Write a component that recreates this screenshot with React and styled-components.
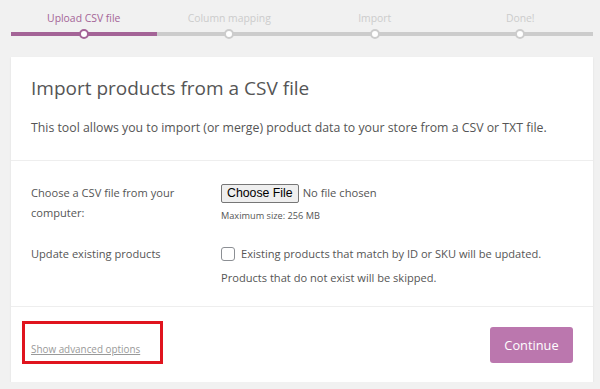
import React from "react";
import styled, { createGlobalStyle } from "styled-components";

const GlobalStyle = createGlobalStyle`
  body {
    margin: 0;
    background: #f1f1f1;
    font-family: "Open Sans", "Noto Sans", sans-serif;
  }
`;

const purple = "#a46497";

const Page = styled.div`
  width: 582px;
  padding: 0 7px 0 11px;
`;

const Steps = styled.ol`
  display: grid;
  grid-template-columns: repeat(4, 1fr);
  list-style: none;
  margin: 0;
  padding: 10px 0 0;
`;

const Step = styled.li`
  display: flex;
  flex-direction: column;
  align-items: center;
  color: ${(p) => (p.$active ? purple : "#ccc")};
  font-size: 10.4px;
  line-height: 16px;
`;

const Track = styled.div`
  position: relative;
  align-self: stretch;
  height: 4px;
  margin-top: 6px;
  background: ${(p) => (p.$active ? purple : "#ccc")};
`;

const Dot = styled.span`
  position: absolute;
  left: 50%;
  top: 50%;
  width: 6px;
  height: 6px;
  margin: -5px 0 0 -5px;
  border-radius: 50%;
  background: #fff;
  border: 2px solid ${(p) => (p.$active ? purple : "#ccc")};
`;

const Card = styled.div`
  margin-top: 21px;
  background: #fff;
  box-shadow: 0 1px 2px rgba(0, 0, 0, 0.08);
  color: #555;
`;

const Header = styled.header`
  padding: 18px 20px 22px;
  border-bottom: 1px solid #eee;
`;

const Title = styled.h2`
  margin: 0;
  font-size: 19px;
  font-weight: 400;
  line-height: 26px;
`;

const Intro = styled.p`
  margin: 17px 0 0;
  font-size: 12.3px;
  line-height: 20px;
  white-space: nowrap;
`;

const Form = styled.section`
  padding: 22px 20px 18px;
  border-bottom: 1px solid #eee;
  display: flex;
  flex-direction: column;
  gap: 21px;
`;

const Row = styled.div`
  display: grid;
  grid-template-columns: 190px 1fr;
  font-size: 11.1px;
  line-height: 20px;
`;

const Label = styled.div`
  padding-right: 30px;
`;

const FileLine = styled.div`
  display: flex;
  align-items: center;
  gap: 4px;
  font-size: 11.2px;
`;

const FileButton = styled.button`
  font-family: "Liberation Sans", Arial, sans-serif;
  font-size: 12.3px;
  color: #000;
  background: #efefef;
  border: 1px solid #767676;
  border-radius: 2px;
  padding: 1px 5px;
  line-height: 15px;
`;

const Hint = styled.div`
  font-size: 9.2px;
  line-height: 14px;
  margin-top: 6px;
`;

const CheckLine = styled.label`
  display: flex;
  align-items: center;
  gap: 6px;
`;

const Box = styled.span`
  width: 12px;
  height: 12px;
  border: 1px solid #8c8f94;
  border-radius: 3px;
`;

const Note = styled.div`
  margin-top: 4px;
`;

const Footer = styled.footer`
  display: flex;
  align-items: flex-start;
  justify-content: space-between;
  padding: 14px 20px 18px 11px;
`;

const Highlight = styled.div`
  border: 3px solid #e0141e;
  padding: 12px 16px 10px 6px;
  width: 113px;
  height: 15px;
`;

const AdvancedLink = styled.a`
  color: #999;
  font-size: 9.9px;
  line-height: 15px;
  text-decoration: underline;
  white-space: nowrap;
`;

const Continue = styled.button`
  font-family: inherit;
  background: #bb77ae;
  color: #fff;
  border: 0;
  border-radius: 3px;
  font-size: 12.8px;
  width: 83px;
  height: 36px;
  margin-top: 6px;
`;

const steps = ["Upload CSV file", "Column mapping", "Import", "Done!"];

export default function App() {
  return (
    <Page>
      <GlobalStyle />
      <Steps>
        {steps.map((s, i) => (
          <Step key={s} $active={i === 0}>
            {s}
            <Track $active={i === 0}>
              <Dot $active={i === 0} />
            </Track>
          </Step>
        ))}
      </Steps>
      <Card>
        <Header>
          <Title>Import products from a CSV file</Title>
          <Intro>
            This tool allows you to import (or merge) product data to your store
            from a CSV or TXT file.
          </Intro>
        </Header>
        <Form>
          <Row>
            <Label>Choose a CSV file from your computer:</Label>
            <div>
              <FileLine>
                <FileButton>Choose File</FileButton>
                No file chosen
              </FileLine>
              <Hint>Maximum size: 256 MB</Hint>
            </div>
          </Row>
          <Row>
            <Label>Update existing products</Label>
            <div>
              <CheckLine>
                <Box />
                Existing products that match by ID or SKU will be updated.
              </CheckLine>
              <Note>Products that do not exist will be skipped.</Note>
            </div>
          </Row>
        </Form>
        <Footer>
          <Highlight>
            <AdvancedLink href="#">Show advanced options</AdvancedLink>
          </Highlight>
          <Continue>Continue</Continue>
        </Footer>
      </Card>
    </Page>
  );
}
